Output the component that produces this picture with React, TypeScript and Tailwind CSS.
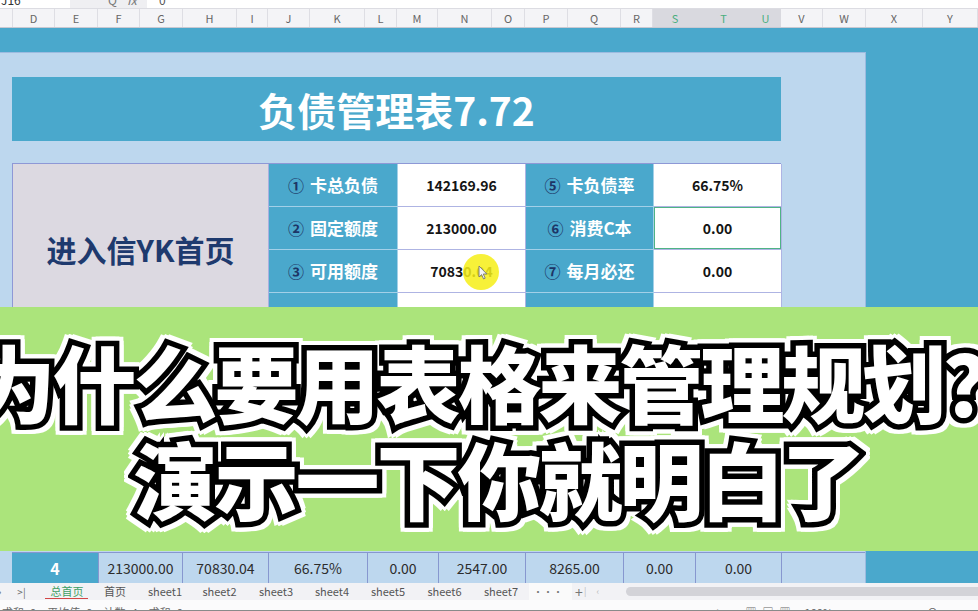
import React from 'react'

const cols: [string, number][] = [
  ['', 13], ['D', 42], ['E', 43], ['F', 42], ['G', 43], ['H', 54], ['I', 31], ['J', 42],
  ['K', 55], ['L', 32], ['M', 41], ['N', 54], ['O', 33], ['P', 43], ['Q', 53], ['R', 32],
  ['S', 44], ['T', 53], ['U', 31], ['V', 42], ['W', 43], ['X', 57], ['Y', 55],
]

const selectedCols = ['S', 'T', 'U']

const rows = [
  { n1: '①', l1: '卡总负债', v1: '142169.96', n2: '⑤', l2: '卡负债率', v2: '66.75%' },
  { n1: '②', l1: '固定额度', v1: '213000.00', n2: '⑥', l2: '消费C本', v2: '0.00', sel: true },
  { n1: '③', l1: '可用额度', v1: '70830.04', n2: '⑦', l2: '每月必还', v2: '0.00', cursor: true },
  { n1: '', l1: '', v1: '', n2: '', l2: '', v2: '' },
]

const bottomRow: [string, number][] = [
  ['213000.00', 84], ['70830.04', 86], ['66.75%', 99], ['0.00', 71], ['2547.00', 87],
  ['8265.00', 98], ['0.00', 72], ['0.00', 86], ['', 84],
]

const tabs: [string, number][] = [
  ['总首页', 48], ['首页', 48], ['sheet1', 52], ['sheet2', 57], ['sheet3', 56],
  ['sheet4', 56], ['sheet5', 56], ['sheet6', 57], ['sheet7', 56],
]

function FormulaBar() {
  return (
    <div className="h-[9px] overflow-hidden flex bg-[#efeff2] border-b border-[#dcdce2]">
      <div className="w-[70px] h-[8px] bg-white overflow-hidden">
        <div className="-mt-[7px] pl-[1px] text-[12px] leading-[14px] text-[#333]">J16</div>
      </div>
      <div className="w-[77px] h-[8px] overflow-hidden flex items-start gap-[10px] pl-[38px]">
        <div className="-mt-[7px] text-[12px] leading-[14px] text-[#777]">Q</div>
        <div className="-mt-[7px] text-[12px] leading-[14px] italic text-[#777]">fx</div>
      </div>
      <div className="flex-1 h-[8px] bg-white overflow-hidden">
        <div className="-mt-[7px] pl-[12px] text-[12px] leading-[14px] text-[#555]">0</div>
      </div>
    </div>
  )
}

function ColumnHeader() {
  return (
    <div className="h-[19px] flex bg-[#f4f4f7] border-b border-[#c9c9d2]">
      {cols.map(([c, w]) => {
        const sel = selectedCols.includes(c)
        return (
          <div
            key={c || 'C'}
            style={{ width: w }}
            className={
              'flex items-center justify-center text-[11px] ' +
              (sel ? 'bg-[#d9d9df] text-[#4aae7e]' : 'text-[#666] border-r border-[#dedee4]')
            }
          >
            {c}
          </div>
        )
      })}
    </div>
  )
}

function Cursor() {
  return (
    <svg width="10" height="15" viewBox="0 0 10 15" className="absolute left-[80px] top-[15px]">
      <path d="M1 1 L1 12 L3.6 9.6 L5.6 14 L7.2 13.2 L5.3 9 L8.8 9 Z" fill="#f4f4f4" stroke="#777" strokeWidth="0.9" />
    </svg>
  )
}

function DebtTable() {
  return (
    <div className="grid grid-cols-[256px_129px_128px_128px_128px] grid-rows-[43px_43px_43px_43px] w-[769px] border-t border-l border-[#8e98d6]">
      <div className="row-span-4 bg-[#dcd9e1] border-r border-b border-[#a9b0e0] flex items-center justify-center text-[30px] font-bold text-[#1e3a6e]">
        进入信YK首页
      </div>
      {rows.map((r, i) => (
        <React.Fragment key={i}>
          <div className="bg-[#4aa8cc] border-r border-b border-[#a3d0e8] flex items-center justify-center text-white font-bold text-[17px]">
            {r.n1 && <span className="text-[#1d3566] text-[16px]">{r.n1}</span>}
            {r.l1 && <span className="ml-[6px]">{r.l1}</span>}
          </div>
          <div className="relative bg-white border-r border-b border-[#aeb4e3] flex items-center justify-center text-[14px] font-bold text-[#141414]">
            {r.v1}
            {r.cursor && (
              <>
                <div className="absolute left-[65px] top-[4px] w-[36px] h-[36px] rounded-full bg-[#f6ef16]/85" />
                <Cursor />
              </>
            )}
          </div>
          <div className="bg-[#4aa8cc] border-r border-b border-[#a3d0e8] flex items-center justify-center text-white font-bold text-[17px]">
            {r.n2 && <span className="text-[#1d3566] text-[16px]">{r.n2}</span>}
            {r.l2 && <span className="ml-[6px]">{r.l2}</span>}
          </div>
          <div
            className={
              'bg-white border-r border-b border-[#aeb4e3] flex items-center justify-center text-[14px] font-bold text-[#141414] ' +
              (r.sel ? 'shadow-[inset_0_0_0_1px_#4fb386]' : '')
            }
          >
            {r.v2}
          </div>
        </React.Fragment>
      ))}
    </div>
  )
}

function BottomRow() {
  return (
    <div className="mt-auto h-[31px] flex border-t border-[#8797cf]">
      <div className="w-[86px] bg-[#4aa8cc] flex items-center justify-center text-white font-bold text-[16px]">4</div>
      {bottomRow.map(([v, w], i) => (
        <div
          key={i}
          style={{ width: w }}
          className="border-l border-[#8797cf] flex items-center justify-center text-[14px] text-[#2c2c2c]"
        >
          {v}
        </div>
      ))}
    </div>
  )
}

function Banner() {
  const line =
    'h-[97px] flex items-center justify-center whitespace-nowrap text-[84px] tracking-[-3px] leading-none font-black text-white [-webkit-text-stroke:11px_#000] [paint-order:stroke_fill] [filter:drop-shadow(4px_0_0_#fff)_drop-shadow(-4px_0_0_#fff)_drop-shadow(0_4px_0_#fff)_drop-shadow(0_-4px_0_#fff)]'
  return (
    <div className="absolute left-0 right-0 top-[307px] h-[244px] bg-[#abe47b] flex flex-col justify-center pl-[18px] overflow-hidden">
      <div className={line}>为什么要用表格来管理规划？</div>
      <div className={line}>演示一下你就明白了</div>
    </div>
  )
}

function SheetTabs() {
  return (
    <div className="h-[17px] flex items-center bg-[#f2f2f5] text-[11px] text-[#555]">
      <div className="w-[43px] flex items-center text-[#666]">
        <span className="-ml-[2px]">›</span>
        <span className="ml-[16px] text-[10px]">&gt;|</span>
      </div>
      {tabs.map(([t, w], i) => (
        <div key={t} style={{ width: w }} className="relative h-full flex items-center justify-center">
          <span className={i === 0 ? 'text-[#3f9e63]' : ''}>{t}</span>
          {i === 0 && <div className="absolute left-[2px] right-[3px] bottom-[1px] h-[1.5px] bg-[#d24545]" />}
        </div>
      ))}
      <div className="w-[43px] h-full bg-[#fafafa] flex items-center gap-[12px] pl-[4px] text-[#777]">
        <span className="text-[10px]">···</span>
        <span className="text-[14px] leading-none">+</span>
      </div>
      <div className="w-[54px] flex items-center gap-[10px] pl-[12px] text-[#bbb] text-[9px]">
        <span>|</span>
        <span>‹</span>
      </div>
      <div className="flex-1 h-[9px] rounded-l-full bg-[#d3d3d8]" />
    </div>
  )
}

function StatusBar() {
  return (
    <div className="h-[11px] overflow-hidden flex bg-[#fbfbfc] border-b border-[#8a8a8a] text-[11px] leading-[14px] text-[#666]">
      <div className="pt-[5px] pl-[2px] whitespace-nowrap">求和=0　平均值=0　计数=4　求和=0</div>
      <div className="ml-auto pt-[5px] flex gap-[14px] pr-[40px] whitespace-nowrap">
        <span>⊹ ⌂</span>
        <span className="flex gap-[6px]"><span>▦</span><span>▤</span><span>▥</span></span>
        <span>100%</span>
        <span className="ml-[80px]">⊖</span>
      </div>
    </div>
  )
}

export default function App() {
  return (
    <div className="relative w-[978px] h-[611px] overflow-hidden flex flex-col bg-white font-['Noto_Sans_CJK_SC','Noto_Sans',sans-serif]">
      <FormulaBar />
      <ColumnHeader />
      <div className="flex-1 flex flex-col bg-[#4aa8cc]">
        <div className="h-[24px] shrink-0" />
        <div className="flex-1 flex">
          <div className="w-[866px] bg-[#bdd7ee] border-t border-r border-[#9dbbe0] flex flex-col pl-[12px] pt-[24px]">
            <div className="h-[64px] w-[769px] bg-[#4aa8cc] flex items-center justify-center text-white font-bold text-[39px]">
              负债管理表7.72
            </div>
            <div className="mt-[22px]">
              <DebtTable />
            </div>
            <BottomRow />
          </div>
          <div className="flex-1" />
        </div>
      </div>
      <SheetTabs />
      <StatusBar />
      <Banner />
    </div>
  )
}
